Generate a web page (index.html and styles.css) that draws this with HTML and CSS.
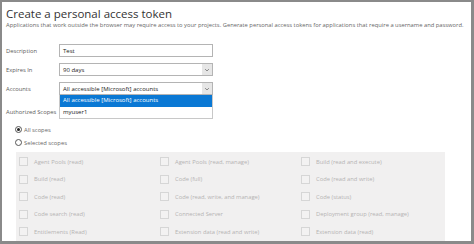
FILE: index.html
```html
<!DOCTYPE html>
<html>
<head>
<meta charset="utf-8">
<link rel="stylesheet" href="styles.css">
</head>
<body>
<div class="frame">
  <h1 class="title">Create a personal access token</h1>
  <p class="intro">Applications that work outside the browser may require access to your projects. Generate personal access tokens for applications that require a username and password.</p>
  <div class="form">
    <div class="row">
      <span class="label">Description</span>
      <div class="input">Test</div>
    </div>
    <div class="row">
      <span class="label">Expires In</span>
      <div class="select"><span class="value">90 days</span><span class="arrow"><svg viewBox="0 0 8 8" width="6" height="6"><path d="M1.5 2.8 L4 5.3 L6.5 2.8" fill="none" stroke="#666" stroke-width="1"/></svg></span></div>
    </div>
    <div class="row">
      <span class="label">Accounts</span>
      <div class="select-wrap">
        <div class="select"><span class="value">All accessible [Microsoft] accounts</span><span class="arrow"><svg viewBox="0 0 8 8" width="6" height="6"><path d="M1.5 2.8 L4 5.3 L6.5 2.8" fill="none" stroke="#666" stroke-width="1"/></svg></span></div>
        <ul class="menu">
          <li class="opt active">All accessible [Microsoft] accounts</li>
          <li class="opt">myuser1</li>
        </ul>
      </div>
    </div>
    <div class="row scopes-row">
      <span class="label">Authorized Scopes</span>
    </div>
  </div>
  <div class="radios">
    <div class="radio-line"><span class="radio checked"></span><span class="rtext">All scopes</span></div>
    <div class="radio-line"><span class="radio"></span><span class="rtext">Selected scopes</span></div>
  </div>
  <div class="panel">
    <div class="grid">
      <div class="cb"><span class="box"></span>Agent Pools (read)</div>
      <div class="cb"><span class="box"></span>Agent Pools (read, manage)</div>
      <div class="cb"><span class="box"></span>Build (read and execute)</div>
      <div class="cb"><span class="box"></span>Build (read)</div>
      <div class="cb"><span class="box"></span>Code (full)</div>
      <div class="cb"><span class="box"></span>Code (read and write)</div>
      <div class="cb"><span class="box"></span>Code (read)</div>
      <div class="cb"><span class="box"></span>Code (read, write, and manage)</div>
      <div class="cb"><span class="box"></span>Code (status)</div>
      <div class="cb"><span class="box"></span>Code search (read)</div>
      <div class="cb"><span class="box"></span>Connected Server</div>
      <div class="cb"><span class="box"></span>Deployment group (read, manage)</div>
      <div class="cb"><span class="box"></span>Entitlements (Read)</div>
      <div class="cb"><span class="box"></span>Extension data (read and write)</div>
      <div class="cb"><span class="box"></span>Extension data (read)</div>
    </div>
  </div>
</div>
</body>
</html>
```

FILE: styles.css
```css
* { box-sizing: border-box; }
html, body { margin: 0; padding: 0; background: #8c8c8c; }
body { width: 474px; height: 244px; overflow: hidden; font-family: "Open Sans", "Noto Sans", sans-serif; }
.frame {
  width: 474px; height: 244px;
  border-style: solid; border-color: #8a8a8a;
  border-width: 2px 3px 3px 2px;
  background: #fff;
  padding: 0 4px;
  overflow: hidden;
}
.title {
  margin: 0; padding-top: 5px;
  font-size: 11.5px; font-weight: 400; color: #333;
  line-height: 14px; height: 19px;
}
.intro {
  margin: 0; font-size: 5.8px; color: #666; line-height: 8px; height: 23px;
  white-space: nowrap;
}
.form { display: flex; flex-direction: column; gap: 6px; }
.row { display: flex; align-items: center; height: 13px; }
.label { width: 53px; font-size: 5.8px; color: #5a5a5a; flex: none; }
.input, .select {
  width: 154px; height: 13px;
  border: 1px solid #b4b4b4; background: #fff;
  font-size: 6px; color: #222;
  display: flex; align-items: center; padding-left: 3px;
}
.select { justify-content: space-between; padding-right: 0; }
.arrow {
  width: 10px; height: 11px; background: #e6e6e6;
  display: flex; align-items: center; justify-content: center;
}
.select-wrap { position: relative; }
.menu {
  position: absolute; left: 0; top: 13px; width: 154px;
  margin: 0; padding: 0; list-style: none;
  background: #fff; border: 1px solid #c8c8c8; border-top: none;
  z-index: 2;
}
.opt { height: 11.5px; line-height: 11.5px; font-size: 6px; color: #222; padding-left: 3px; }
.opt.active { background: #0a78d4; color: #fff; }
.scopes-row { margin-top: 5px; height: 12px; }
.radios { padding-left: 9px; margin-top: 6px; display: flex; flex-direction: column; gap: 2px; }
.radio-line { display: flex; align-items: center; height: 11px; }
.radio {
  width: 7px; height: 7px; border-radius: 50%;
  border: 1px solid #555; background: #fff; position: relative; margin-right: 2px;
}
.radio.checked::after {
  content: ""; position: absolute; left: 1px; top: 1px; width: 3px; height: 3px; border-radius: 50%; background: #222;
}
.rtext { font-size: 5.8px; color: #666; }
.panel {
  margin: 4px 0 0 10px; width: 429px; height: 100px;
  background: #f1f0f0; padding: 5px 0 0 3px;
}
.grid { display: grid; grid-template-columns: 141px 141px 141px; row-gap: 8px; }
.cb { display: flex; align-items: center; height: 9.5px; font-size: 5.8px; color: #b5b3b3; white-space: nowrap; }
.box {
  width: 9px; height: 9px; border: 1px solid #d6d6d6; background: #f3f2f2;
  margin-right: 6px; flex: none;
}
```
